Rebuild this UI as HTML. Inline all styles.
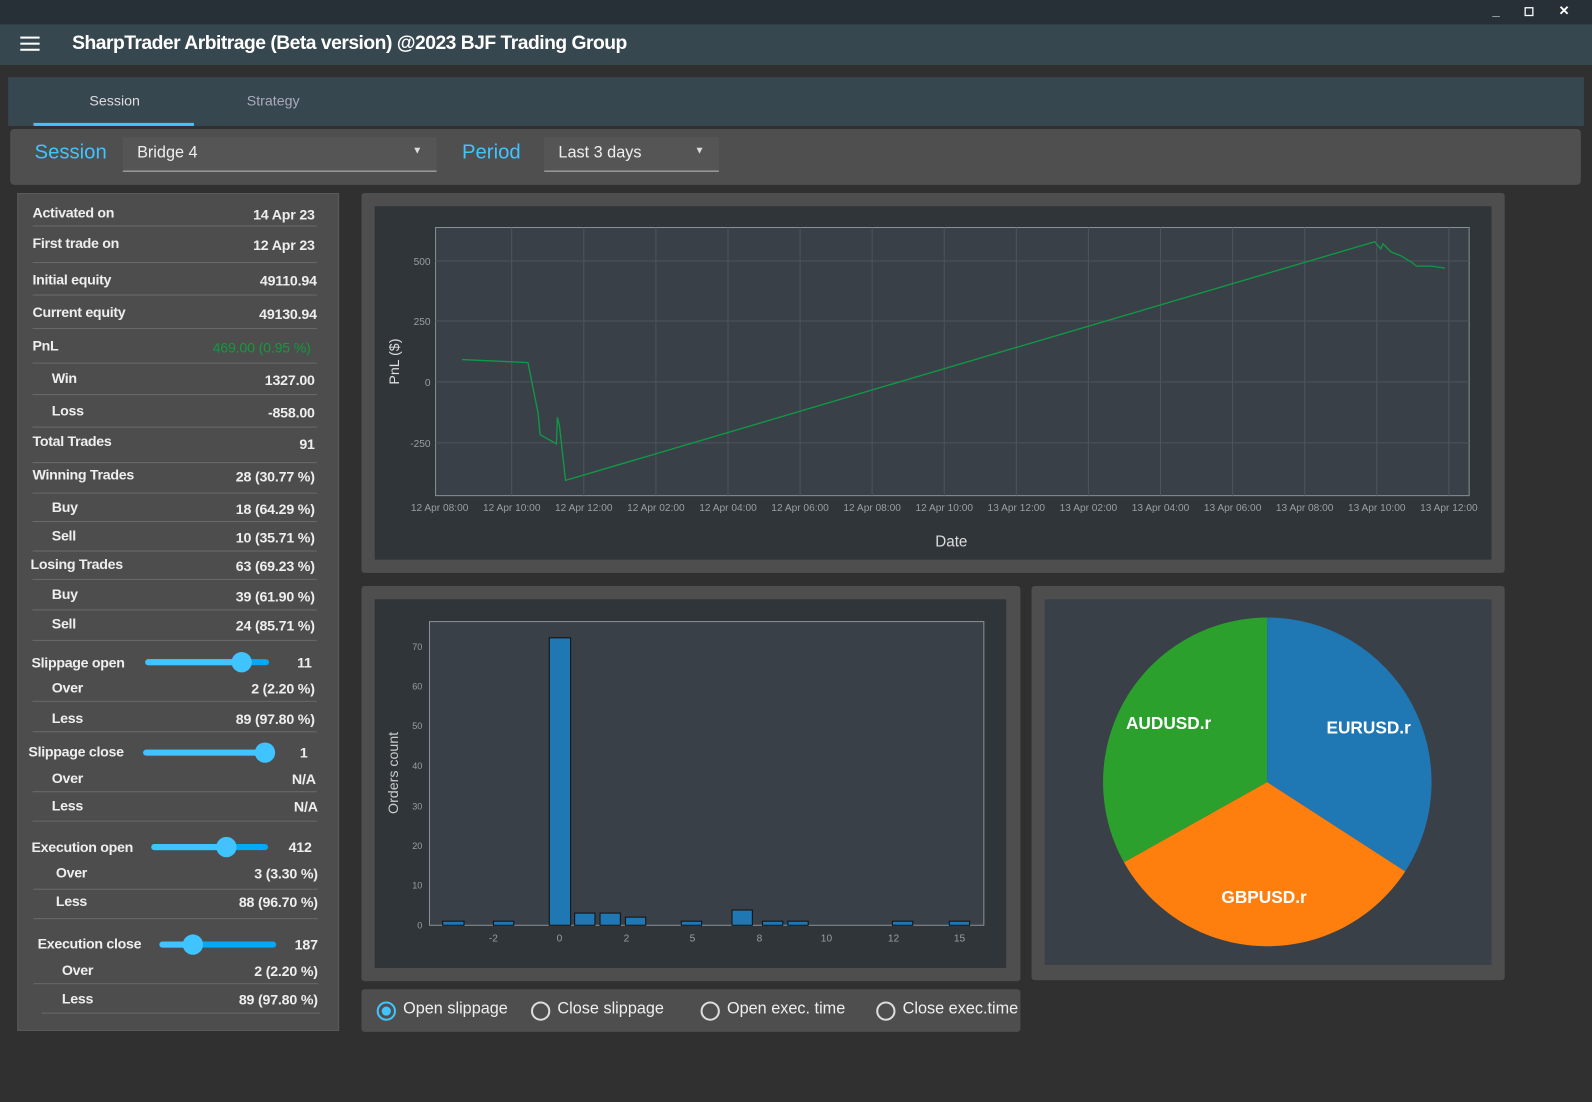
<!DOCTYPE html>
<html><head><meta charset="utf-8"><style>
*{margin:0;padding:0;box-sizing:border-box}
body{width:1592px;height:1102px;background:#303030;font-family:"Liberation Sans",sans-serif;position:relative;overflow:hidden;color:#eee}
#w{position:absolute;left:0;top:0;width:1568px;height:1085px;transform:scale(1.01531,1.01567);transform-origin:0 0}
.a{position:absolute}
.lbl{position:absolute;font-size:14px;color:#eee;font-weight:bold;letter-spacing:-0.3px}
.val{position:absolute;font-size:14px;color:#eee;font-weight:bold;right:0;text-align:right;letter-spacing:-0.2px}
.ln{position:absolute;height:1px;background:#6a6a6a}
.sl{position:absolute;height:6px;border-radius:3px;background:#03a9f4}
.sl i{position:absolute;top:0;left:0;height:6px;border-radius:3px;background:#40c4ff}
.sl b{position:absolute;top:-7px;width:20px;height:20px;border-radius:50%;background:#40c4ff}
.radio{position:absolute;top:986px;width:19px;height:19px;border:2px solid #ddd;border-radius:50%}
.rt{position:absolute;top:985px;font-size:16px;color:#eee}
svg text{font-family:"Liberation Sans",sans-serif}
</style></head><body><div id="w">
<div class="a" style="left:0;top:0;width:1568px;height:24px;background:#263036"></div>
<div class="a" style="right:12px;top:3px;font-size:13px;color:#fff;font-weight:bold;letter-spacing:10px">_ ◻ ✕</div>
<div class="a" style="left:0;top:24px;width:1568px;height:40px;background:#37474f"></div>
<div class="a" style="left:20px;top:36px;width:19px;height:2px;background:#fff;box-shadow:0 6px 0 #fff,0 12px 0 #fff"></div>
<div class="a" style="left:71px;top:32px;font-size:19px;color:#fff;font-weight:bold;letter-spacing:-0.5px">SharpTrader Arbitrage (Beta version) @2023 BJF Trading Group</div>
<div class="a" style="left:8px;top:76px;width:1552px;height:48px;background:#37474f"></div>
<div class="a" style="left:88px;top:91px;font-size:14px;color:#ddd">Session</div>
<div class="a" style="left:243px;top:91px;font-size:14px;color:#aab">Strategy</div>
<div class="a" style="left:33px;top:121px;width:158px;height:3px;background:#40c4ff"></div>
<div class="a" style="left:10px;top:127px;width:1547px;height:55px;background:#4f4f4f;border-radius:4px"></div>
<div class="a" style="left:34px;top:139px;font-size:20px;color:#40c4ff">Session</div>
<div class="a" style="left:121px;top:135px;width:309px;height:34px;background:#555;border-bottom:1px solid #bbb"></div>
<div class="a" style="left:135px;top:142px;font-size:16px;color:#eee">Bridge 4</div>
<div class="a" style="left:406px;top:143px;font-size:10px;color:#ddd">▼</div>
<div class="a" style="left:455px;top:139px;font-size:20px;color:#40c4ff">Period</div>
<div class="a" style="left:536px;top:135px;width:172px;height:34px;background:#555;border-bottom:1px solid #bbb"></div>
<div class="a" style="left:550px;top:142px;font-size:16px;color:#eee">Last 3 days</div>
<div class="a" style="left:684px;top:143px;font-size:10px;color:#ddd">▼</div>

<div class="a" style="left:17px;top:190px;width:317px;height:825px;background:#4d4d4d;border:1px solid #5a5a5a"></div>
<div class="a" style="left:0;top:0;width:334px;height:1085px">
<div class="lbl" style="left:32px;top:201px">Activated on</div><div class="val" style="right:24px;top:203px">14 Apr 23</div><div class="ln" style="left:32px;width:280px;top:222px"></div>
<div class="lbl" style="left:32px;top:231px">First trade on</div><div class="val" style="right:24px;top:233px">12 Apr 23</div><div class="ln" style="left:32px;width:280px;top:258px"></div>
<div class="lbl" style="left:32px;top:267px">Initial equity</div><div class="val" style="right:22px;top:268px">49110.94</div><div class="ln" style="left:32px;width:280px;top:290px"></div>
<div class="lbl" style="left:32px;top:299px">Current equity</div><div class="val" style="right:22px;top:301px">49130.94</div><div class="ln" style="left:32px;width:280px;top:323px"></div>
<div class="lbl" style="left:32px;top:332px">PnL</div><div class="val" style="right:28px;top:334px;color:#129a3e;font-weight:normal">469.00 (0.95 %)</div><div class="ln" style="left:32px;width:280px;top:357px"></div>
<div class="lbl" style="left:51px;top:364px">Win</div><div class="val" style="right:24px;top:366px">1327.00</div><div class="ln" style="left:32px;width:280px;top:388px"></div>
<div class="lbl" style="left:51px;top:396px">Loss</div><div class="val" style="right:24px;top:398px">-858.00</div><div class="ln" style="left:32px;width:280px;top:420px"></div>
<div class="lbl" style="left:32px;top:426px">Total Trades</div><div class="val" style="right:24px;top:429px">91</div><div class="ln" style="left:32px;width:280px;top:455px"></div>
<div class="lbl" style="left:32px;top:459px">Winning Trades</div><div class="val" style="right:24px;top:461px">28 (30.77 %)</div><div class="ln" style="left:32px;width:280px;top:485px"></div>
<div class="lbl" style="left:51px;top:491px">Buy</div><div class="val" style="right:24px;top:493px">18 (64.29 %)</div><div class="ln" style="left:32px;width:280px;top:513px"></div>
<div class="lbl" style="left:51px;top:519px">Sell</div><div class="val" style="right:24px;top:521px">10 (35.71 %)</div><div class="ln" style="left:32px;width:280px;top:542px"></div>
<div class="lbl" style="left:30px;top:547px">Losing Trades</div><div class="val" style="right:24px;top:549px">63 (69.23 %)</div><div class="ln" style="left:32px;width:280px;top:570px"></div>
<div class="lbl" style="left:51px;top:577px">Buy</div><div class="val" style="right:24px;top:579px">39 (61.90 %)</div><div class="ln" style="left:32px;width:280px;top:600px"></div>
<div class="lbl" style="left:51px;top:606px">Sell</div><div class="val" style="right:24px;top:608px">24 (85.71 %)</div><div class="ln" style="left:32px;width:280px;top:630px"></div>

<div class="lbl" style="left:31px;top:644px">Slippage open</div>
<div class="sl" style="left:143px;top:649px;width:122px"><i style="width:95px"></i><b style="left:85px"></b></div>
<div class="val" style="right:27px;top:644px">11</div>
<div class="lbl" style="left:51px;top:669px">Over</div><div class="val" style="right:24px;top:670px">2 (2.20 %)</div><div class="ln" style="left:32px;width:280px;top:690px"></div>
<div class="lbl" style="left:51px;top:699px">Less</div><div class="val" style="right:24px;top:700px">89 (97.80 %)</div><div class="ln" style="left:32px;width:280px;top:720px"></div>
<div class="lbl" style="left:28px;top:732px">Slippage close</div>
<div class="sl" style="left:141px;top:738px;width:126px"><i style="width:126px"></i><b style="left:110px"></b></div>
<div class="val" style="right:31px;top:733px">1</div>
<div class="lbl" style="left:51px;top:758px">Over</div><div class="val" style="right:23px;top:759px">N/A</div><div class="ln" style="left:32px;width:280px;top:779px"></div>
<div class="lbl" style="left:51px;top:785px">Less</div><div class="val" style="right:21px;top:786px">N/A</div><div class="ln" style="left:32px;width:280px;top:808px"></div>
<div class="lbl" style="left:31px;top:826px">Execution open</div>
<div class="sl" style="left:149px;top:831px;width:115px"><i style="width:75px"></i><b style="left:64px"></b></div>
<div class="val" style="right:27px;top:826px">412</div>
<div class="lbl" style="left:55px;top:851px">Over</div><div class="val" style="right:21px;top:852px">3 (3.30 %)</div><div class="ln" style="left:33px;width:280px;top:875px"></div>
<div class="lbl" style="left:55px;top:879px">Less</div><div class="val" style="right:21px;top:880px">88 (96.70 %)</div><div class="ln" style="left:33px;width:280px;top:904px"></div>
<div class="lbl" style="left:37px;top:921px">Execution close</div>
<div class="sl" style="left:157px;top:927px;width:115px"><i style="width:35px"></i><b style="left:23px"></b></div>
<div class="val" style="right:21px;top:922px">187</div>
<div class="lbl" style="left:61px;top:947px">Over</div><div class="val" style="right:21px;top:948px">2 (2.20 %)</div><div class="ln" style="left:33px;width:280px;top:968px"></div>
<div class="lbl" style="left:61px;top:975px">Less</div><div class="val" style="right:21px;top:976px">89 (97.80 %)</div><div class="ln" style="left:41px;width:274px;top:997px"></div>
</div>

<div class="a" style="left:356px;top:190px;width:1126px;height:374px;background:#4e4e4e;border-radius:3px"></div>
<svg class="a" style="left:0;top:0" width="1568" height="1085">
<rect x="369" y="203" width="1100" height="348" fill="#30353a"/>
<rect x="429" y="224" width="1018" height="264" fill="#3a4048" stroke="#8a8f96"/>
<g stroke="#4d545c" stroke-width="1">
<line x1="429" x2="1447" y1="257" y2="257"/><line x1="429" x2="1447" y1="316" y2="316"/><line x1="429" x2="1447" y1="376" y2="376"/><line x1="429" x2="1447" y1="436" y2="436"/>
<line x1="504" x2="504" y1="224" y2="488"/><line x1="575" x2="575" y1="224" y2="488"/><line x1="646" x2="646" y1="224" y2="488"/><line x1="717" x2="717" y1="224" y2="488"/><line x1="788" x2="788" y1="224" y2="488"/><line x1="859" x2="859" y1="224" y2="488"/><line x1="930" x2="930" y1="224" y2="488"/><line x1="1001" x2="1001" y1="224" y2="488"/><line x1="1072" x2="1072" y1="224" y2="488"/><line x1="1143" x2="1143" y1="224" y2="488"/><line x1="1214" x2="1214" y1="224" y2="488"/><line x1="1285" x2="1285" y1="224" y2="488"/><line x1="1356" x2="1356" y1="224" y2="488"/><line x1="1427" x2="1427" y1="224" y2="488"/>
</g>
<g font-size="10" fill="#9a9ea3" text-anchor="end">
<text x="424" y="261">500</text><text x="424" y="320">250</text><text x="424" y="380">0</text><text x="424" y="440">-250</text>
</g>
<g font-size="10" fill="#9a9ea3" text-anchor="middle">
<text x="433" y="503">12 Apr 08:00</text><text x="504" y="503">12 Apr 10:00</text><text x="575" y="503">12 Apr 12:00</text><text x="646" y="503">12 Apr 02:00</text><text x="717" y="503">12 Apr 04:00</text><text x="788" y="503">12 Apr 06:00</text><text x="859" y="503">12 Apr 08:00</text><text x="930" y="503">12 Apr 10:00</text><text x="1001" y="503">13 Apr 12:00</text><text x="1072" y="503">13 Apr 02:00</text><text x="1143" y="503">13 Apr 04:00</text><text x="1214" y="503">13 Apr 06:00</text><text x="1285" y="503">13 Apr 08:00</text><text x="1356" y="503">13 Apr 10:00</text><text x="1427" y="503">13 Apr 12:00</text>
</g>
<text x="937" y="538" font-size="15" fill="#ddd" text-anchor="middle">Date</text>
<text transform="translate(393,356) rotate(-90)" font-size="14" fill="#ddd" text-anchor="middle">PnL ($)</text>
<polyline fill="none" stroke="#0f9a45" stroke-width="1.3" points="455,354 520,357 523,372 530,407 532,428 548,437 549,411 551,419 557,473 1354,238 1360,245 1362,240 1370,248 1380,252 1390,258 1395,262 1410,262 1423,264"/>
</svg>

<div class="a" style="left:356px;top:577px;width:649px;height:389px;background:#4e4e4e;border-radius:3px"></div>
<svg class="a" style="left:0;top:0" width="1568" height="1085">
<rect x="369" y="590" width="622" height="363" fill="#30353a"/>
<rect x="423" y="612" width="546" height="299" fill="#3a4048" stroke="#8a8f96"/>
<g font-size="9" fill="#9a9ea3" text-anchor="end">
<text x="416" y="640">70</text><text x="416" y="679">60</text><text x="416" y="718">50</text><text x="416" y="757">40</text><text x="416" y="797">30</text><text x="416" y="836">20</text><text x="416" y="875">10</text><text x="416" y="914">0</text>
</g>
<g font-size="10" fill="#9a9ea3" text-anchor="middle">
<text x="486" y="927">-2</text><text x="551" y="927">0</text><text x="617" y="927">2</text><text x="682" y="927">5</text><text x="748" y="927">8</text><text x="814" y="927">10</text><text x="880" y="927">12</text><text x="945" y="927">15</text>
</g>
<text transform="translate(392,761) rotate(-90)" font-size="14" fill="#ccc" text-anchor="middle">Orders count</text>
<g fill="#1f77b4" stroke="#111" stroke-width="1">
<rect x="436" y="907" width="21" height="4"/><rect x="486" y="907" width="20" height="4"/><rect x="541" y="628" width="21" height="283"/><rect x="566" y="899" width="20" height="12"/><rect x="591" y="899" width="20" height="12"/><rect x="616" y="903" width="20" height="8"/><rect x="671" y="907" width="20" height="4"/><rect x="721" y="896" width="20" height="15"/><rect x="751" y="907" width="20" height="4"/><rect x="776" y="907" width="20" height="4"/><rect x="879" y="907" width="20" height="4"/><rect x="935" y="907" width="20" height="4"/>
</g>
</svg>

<div class="a" style="left:1016px;top:577px;width:466px;height:388px;background:#4e4e4e;border-radius:3px"></div>
<svg class="a" style="left:0;top:0" width="1568" height="1085">
<rect x="1029" y="590" width="440" height="360" fill="#3a4048"/>
<path d="M1248,770 L1248,608 A162,162 0 0 1 1384,858 Z" fill="#1f77b4"/>
<path d="M1248,770 L1384,858 A162,162 0 0 1 1107,849 Z" fill="#ff7f0e"/>
<path d="M1248,770 L1107,849 A162,162 0 0 1 1248,608 Z" fill="#2ca02c"/>
<g font-size="17" font-weight="bold" fill="#fff" text-anchor="middle">
<text x="1348" y="722">EURUSD.r</text><text x="1151" y="718">AUDUSD.r</text><text x="1245" y="889">GBPUSD.r</text>
</g>
</svg>

<div class="a" style="left:356px;top:974px;width:649px;height:42px;background:#4e4e4e;border-radius:3px"></div>
<div class="radio" style="left:371px;border-color:#40c4ff"><div style="margin:3px;width:9px;height:9px;border-radius:50%;background:#40c4ff"></div></div>
<div class="rt" style="left:397px">Open slippage</div>
<div class="radio" style="left:523px"></div><div class="rt" style="left:549px">Close slippage</div>
<div class="radio" style="left:690px"></div><div class="rt" style="left:716px">Open exec. time</div>
<div class="radio" style="left:863px"></div><div class="rt" style="left:889px">Close exec.time</div>
</div></body></html>
